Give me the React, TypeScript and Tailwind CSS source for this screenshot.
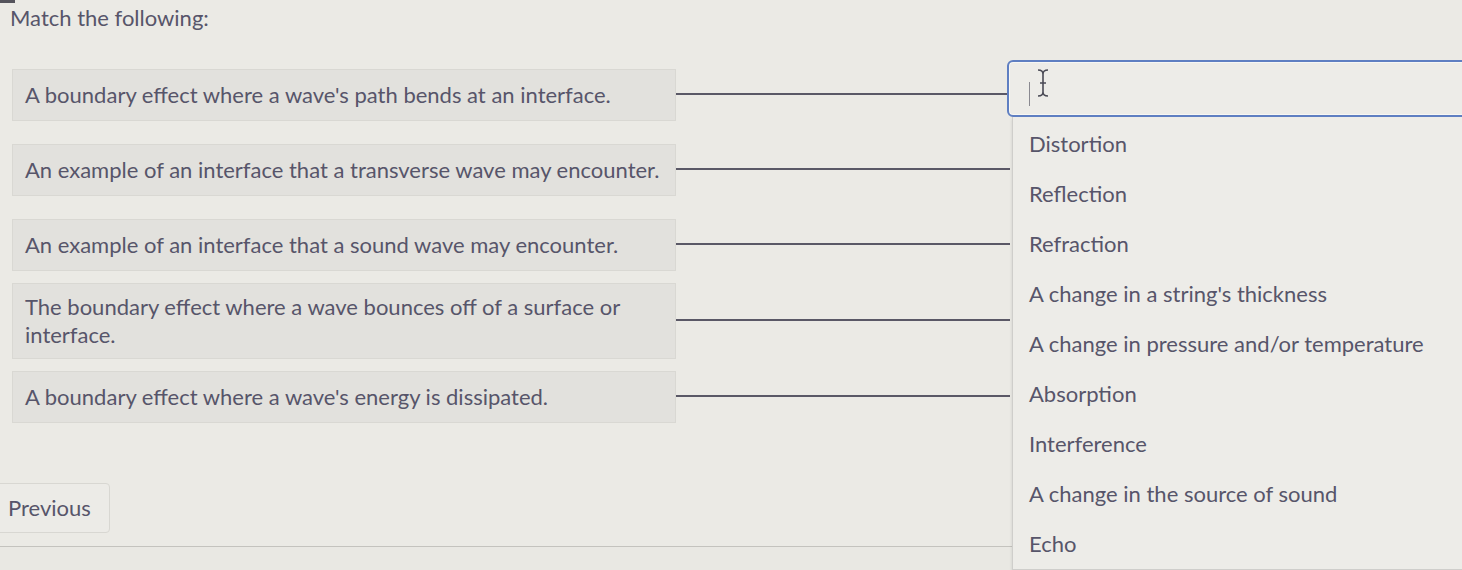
import React from "react";

const PROMPTS = [
  { text: "A boundary effect where a wave's path bends at an interface.", gap: "mt-[37px]", pad: "py-[11px]" },
  { text: "An example of an interface that a transverse wave may encounter.", gap: "mt-[23px]", pad: "py-[11px]" },
  { text: "An example of an interface that a sound wave may encounter.", gap: "mt-[23px]", pad: "py-[11px]" },
  { text: "The boundary effect where a wave bounces off of a surface or interface.", gap: "mt-[12px]", pad: "py-[9px]" },
  { text: "A boundary effect where a wave's energy is dissipated.", gap: "mt-[12px]", pad: "py-[11px]" },
];

const OPTIONS = [
  "Distortion",
  "Reflection",
  "Refraction",
  "A change in a string's thickness",
  "A change in pressure and/or temperature",
  "Absorption",
  "Interference",
  "A change in the source of sound",
  "Echo",
];

function IBeam() {
  return (
    <svg width="16" height="30" viewBox="0 0 16 30" className="absolute left-[26px] top-[6px]">
      <path
        d="M3 2 Q8 2 8 6 Q8 2 13 2 M8 6 V24 M3 28 Q8 28 8 24 Q8 28 13 28 M5 15 H11"
        fill="none"
        stroke="#4a4a55"
        strokeWidth="1.6"
      />
    </svg>
  );
}

export default function App() {
  return (
    <div
      className="relative w-[1462px] h-[570px] overflow-hidden bg-[#ebeae5] text-[#57556a] text-[22px] leading-[28px]"
      style={{ fontFamily: "Lato, 'Open Sans', sans-serif" }}
    >
      <div className="absolute left-0 top-0 w-[15px] h-[3px] bg-[#55545c]" />

      <h1 className="pl-[10px] pt-[4px]">Match the following:</h1>

      <div className="flex flex-col">
        {PROMPTS.map((p, i) => (
          <div key={i} className={`flex items-center ${p.gap}`}>
            <div
              className={`ml-[12px] w-[664px] shrink-0 border border-[#d9d8d3] bg-[#e2e1dd] pl-[12px] pr-[6px] ${p.pad}`}
            >
              {p.text}
            </div>
            <div className="mb-[3px] h-[2px] flex-1 bg-[#5a5866]" />
            <div className="w-[452px] shrink-0" />
          </div>
        ))}
      </div>

      <div className="mt-[60px] flex">
        <button className="-ml-[4px] h-[50px] w-[114px] rounded border border-[#d8d7d2] bg-[#ecebe7] pl-[11px] text-left">
          Previous
        </button>
      </div>

      <div className="mt-[13px] h-[40px] w-[1012px] border-t border-[#c4c3be] bg-[#e9e8e3]" />

      {/* open dropdown of the first select */}
      <div className="absolute left-[1007px] top-[60px] w-[470px]">
        <div className="relative h-[57px] rounded-l-[6px] border-2 border-[#5f7fc2] bg-[#edece8] shadow-[inset_0_0_0_1px_#f7f7f4]">
          <div className="absolute left-[20px] top-[20px] h-[24px] w-[1px] bg-[#8a8990]" />
          <IBeam />
        </div>
        <div className="ml-[5px] border border-t-0 border-[#cfcecb] bg-[#edece8] shadow-[0_2px_3px_rgba(0,0,0,0.12)]">
          <ul className="pt-[2px]">
            {OPTIONS.map((o) => (
              <li key={o} className="h-[50px] pl-[16px] leading-[50px]">
                {o}
              </li>
            ))}
          </ul>
        </div>
      </div>
    </div>
  );
}
